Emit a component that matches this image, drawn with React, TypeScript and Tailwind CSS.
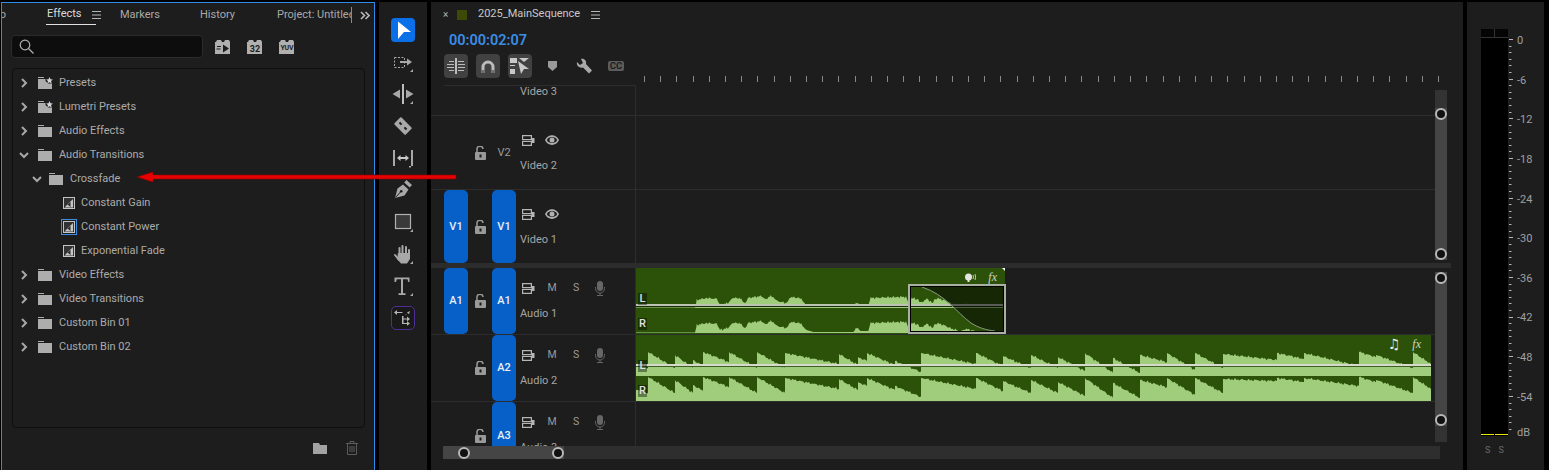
import React from "react";

const tree = [
  { label: "Presets", kind: "star", depth: 0 },
  { label: "Lumetri Presets", kind: "star", depth: 0 },
  { label: "Audio Effects", kind: "folder", depth: 0 },
  { label: "Audio Transitions", kind: "folder", depth: 0, open: true },
  { label: "Crossfade", kind: "folder", depth: 1, open: true },
  { label: "Constant Gain", kind: "fx", depth: 2 },
  { label: "Constant Power", kind: "fx", depth: 2, selected: true },
  { label: "Exponential Fade", kind: "fx", depth: 2 },
  { label: "Video Effects", kind: "folder", depth: 0 },
  { label: "Video Transitions", kind: "folder", depth: 0 },
  { label: "Custom Bin 01", kind: "folder", depth: 0 },
  { label: "Custom Bin 02", kind: "folder", depth: 0 },
];

function Chevron({ open }: { open?: boolean }) {
  return (
    <svg width="10" height="10" viewBox="0 0 10 10" fill="none" stroke="#a8a8a8" strokeWidth="2">
      {open ? <path d="M1 3l4 4 4-4" /> : <path d="M3 1l4 4-4 4" />}
    </svg>
  );
}

function Folder({ star }: { star?: boolean }) {
  return (
    <svg width="15" height="13" viewBox="0 0 15 13" fill="#adadad">
      <rect x="0" y="0" width="6" height="1" />
      {star ? (
        <>
          <path d="M0 2h7.500v2l2.500 2.500h4V12H0z" />
          <path d="M11.500 0l1 2.200 2.400.3-1.800 1.500.5 2.400-2.100-1.200-2.100 1.200.5-2.400L8.100 2.500l2.400-.3z" fill="#d4d4d4" />
        </>
      ) : (
        <path d="M0 2h14v10H0z" />
      )}
    </svg>
  );
}

function FxIcon() {
  return (
    <svg width="12" height="12" viewBox="0 0 12 12">
      <rect width="12" height="12" fill="#c4c4c4" />
      <path d="M1 1h10v10H1z" fill="#333" />
      <path d="M1.500 10.500l8.500-8.500v8.500z" fill="#c4c4c4" />
      <path d="M4.500 7.500l3-2.500v5z" fill="#2a2a2a" />
    </svg>
  );
}

function Menu() {
  return (
    <svg className="shrink-0" width="9" height="8" viewBox="0 0 9 8" fill="#b5b5b5">
      <rect y="0" width="9" height="1" />
      <rect y="3.500" width="9" height="1" />
      <rect y="7" width="9" height="1" />
    </svg>
  );
}

function Block({ children }: { children: React.ReactNode }) {
  return (
    <svg width="16" height="14" viewBox="0 0 16 14" fill="#b0b0b0">
      <path d="M0 2h1l1-2h4l1 2h2l1-2h4l1 2v12H0z" />
      {children}
    </svg>
  );
}

function EffectsPanel() {
  return (
    <div className="w-[374px] h-[468px] mt-[2px] ml-px bg-[#1d1d1d] border-x border-t border-[#2d8ceb] shrink-0 flex flex-col">
      <div className="h-[22px] flex items-center pt-[2px] text-[11px] text-[#a9a9a9]">
        <div className="w-[4px] overflow-hidden flex justify-end">
          <span className="shrink-0">Info</span>
        </div>
        <div className="ml-[40px] w-[50px] h-[20px] border-b border-[#e0e0e0] flex items-center gap-[10px] pl-px shrink-0">
          <span className="text-[#dcdcdc]">Effects</span>
          <Menu />
        </div>
        <span className="ml-6 w-[80px] shrink-0">Markers</span>
        <span className="w-[77px] shrink-0">History</span>
        <div className="w-[75px] shrink-0 overflow-hidden whitespace-nowrap border-r border-[#8a8a8a]">Project: Untitled</div>
        <svg className="ml-2 shrink-0" width="10" height="9" viewBox="0 0 10 9" fill="none" stroke="#b8b8b8" strokeWidth="1.600">
          <path d="M1 1l3.500 3.500L1 8M5.500 1L9 4.500 5.500 8" />
        </svg>
      </div>
      <div className="flex items-center mt-[10px] ml-[9px] h-[23px]">
        <div className="w-[192px] h-[23px] rounded bg-[#0d0d0d] border border-[#2b2b2b] flex items-center pl-[7px]">
          <svg width="15" height="15" viewBox="0 0 15 15" fill="none" stroke="#b0b0b0" strokeWidth="1.200">
            <circle cx="6" cy="6" r="4.800" />
            <path d="M9.500 9.500l5 5" />
          </svg>
        </div>
        <div className="ml-3 flex gap-4">
          <Block>
            <path d="M2 6h4v1H2zM1.500 8.500h4v1h-4zM8 4.500l6 4-6 4z" fill="#1d1d1d" />
          </Block>
          <div className="relative">
            <Block>{null}</Block>
            <span className="absolute inset-0 pt-[2px] text-center text-[9px] leading-[14px] font-bold text-[#1d1d1d]">32</span>
          </div>
          <div className="relative">
            <Block>{null}</Block>
            <span className="absolute inset-0 pt-[1px] text-center text-[7px] leading-[14px] font-bold text-[#1d1d1d]">YUV</span>
          </div>
        </div>
      </div>
      <div className="ml-[10px] mt-[10px] w-[353px] h-[360px] rounded border border-[#0f0f0f] pt-[2px]">
        {tree.map((t) => (
          <div key={t.label} className="h-6 flex items-center text-[11px] text-[#ababab]">
            {t.depth === 2 ? (
              <div className="ml-[48px] w-4 h-4 flex items-center justify-center mr-[4px]">
                <div className={t.selected ? "w-4 h-4 border border-[#3a8ee6] flex items-center justify-center" : "flex"}>
                  <FxIcon />
                </div>
              </div>
            ) : (
              <>
                <div className={t.depth === 1 ? "ml-[19px] w-[17px] flex" : "ml-[6px] w-[19px] flex"}>
                  <Chevron open={t.open} />
                </div>
                <div className="w-[21px] flex">
                  <Folder star={t.kind === "star"} />
                </div>
              </>
            )}
            <span className="leading-[14px]">{t.label}</span>
          </div>
        ))}
      </div>
      <div className="flex justify-end items-center gap-[19px] pr-[16px] mt-[13px]">
        <svg width="14" height="11" viewBox="0 0 14 11" fill="#a3a3a3">
          <path d="M0 0h6l1 2h7v9H0z" />
        </svg>
        <svg width="12" height="14" viewBox="0 0 12 14" fill="none" stroke="#5c5c5c">
          <path d="M0 2.500h12M4 2.500V.5h4v2M1.500 2.500v11h9v-11M4 5v6M6 5v6M8 5v6" />
        </svg>
      </div>
    </div>
  );
}

function Corner() {
  return <path d="M22 19v3h-3z" fill="#a8a8a8" />;
}

function Tool({ children }: { children: React.ReactNode }) {
  return (
    <svg width="24" height="24" viewBox="0 0 24 24" fill="#a8a8a8">
      {children}
    </svg>
  );
}

function ToolsPanel() {
  return (
    <div className="w-[48px] h-[468px] mt-[2px] ml-[4px] bg-[#1d1d1d] shrink-0 flex flex-col items-center gap-2 pt-4">
      <div className="w-6 h-6 rounded bg-[#0b6fe8]">
        <svg width="24" height="24" viewBox="0 0 24 24" fill="#fff">
          <path d="M7 3.500L20 14h-7l-6 7z" />
        </svg>
      </div>
      <Tool>
        <rect x="3.500" y="7.500" width="10" height="10" fill="none" stroke="#a8a8a8" strokeDasharray="2 1.500" />
        <path d="M9 11h7V8.500l5 3.500-5 3.500V13H9z" />
        <Corner />
      </Tool>
      <Tool>
        <path d="M1.500 12L9 7.500v9zM22.500 12L15 7.500v9z" />
        <rect x="11" y="2" width="2" height="20" fill="#bdbdbd" />
        <Corner />
      </Tool>
      <Tool>
        <g transform="rotate(45 12 12)">
          <rect x="4" y="7" width="16" height="10" rx="1" />
          <path d="M7 12h3M14 12h3" stroke="#1d1d1d" strokeWidth="2" />
        </g>
      </Tool>
      <Tool>
        <path d="M2 4h2v16H2zM20 4h2v16h-2l0 1.500h-2V20h2z" />
        <path d="M6 12l3.500-3v2h5V9l3.500 3-3.500 3v-2h-5v2z" fill="#c8c8c8" />
      </Tool>
      <Tool>
        <path d="M4 20L6.500 10.500 12 6.500 17.500 11.500 13.500 17.500Z" />
        <path d="M13.200 4.500L15.500 2 21 7 18.700 9.500Z" />
        <path d="M4.500 19.500L9.500 14" stroke="#1d1d1d" />
        <circle cx="10.200" cy="13.300" r="1.300" fill="#1d1d1d" />
      </Tool>
      <Tool>
        <rect x="4.500" y="4.500" width="15" height="14" fill="#3a3a3a" stroke="#b0b0b0" strokeWidth="1.200" />
        <Corner />
      </Tool>
      <Tool>
        <g stroke="#a8a8a8" strokeWidth="2" strokeLinecap="round">
          <path d="M8.500 12V6M11.500 11V4M15 11V5M18 13V8M4 13l4 5" />
        </g>
        <path d="M7 11h12v6l-3 4.500H10L6 17z" />
        <Corner />
      </Tool>
      <Tool>
        <path d="M3.500 3.500h15V8h-1.200l-.8-2.800H12v14h2.500V21h-7v-1.800H10v-14H5.800L5 8H3.500z" />
        <Corner />
      </Tool>
      <div className="w-6 h-6 rounded-[5px] border border-[#4f2f97] bg-[#191919]">
        <svg width="22" height="22" viewBox="0 0 22 22" fill="#b5b5b5">
          <path d="M2 5.500L5 3v2h5.500v1H5v2zM13 8l3-1.500-1-1 3-1.500-1 3.200-1-1-2.500 2zM10 9h1.500v8H10zM10 11.500h5v-2l3 2.500-3 2.500v-2h-5zM10 16h5v-1.800l3 2.300-3 2.300V17h-5z" />
        </svg>
      </div>
    </div>
  );
}

function SyncIcon() {
  return (
    <svg width="13" height="11" viewBox="0 0 13 11" fill="none" stroke="#b5b5b5" strokeWidth="1.200">
      <path d="M.6.6h8.800v4H.6zM.6 6.500h8.800v3.900H.6z" />
      <rect x="9.500" y="3" width="3" height="5" fill="#b5b5b5" stroke="none" />
    </svg>
  );
}

function Eye() {
  return (
    <svg width="14" height="10" viewBox="0 0 14 10">
      <path d="M0 5c3-6.500 11-6.500 14 0-3 6.500-11 6.500-14 0z" fill="#b0b0b0" />
      <ellipse cx="7" cy="5" rx="5" ry="3" fill="#1d1d1d" />
      <circle cx="7" cy="5" r="2.500" fill="#b0b0b0" />
    </svg>
  );
}

function Mic() {
  return (
    <svg width="10" height="15" viewBox="0 0 10 15" fill="none" stroke="#666">
      <rect x="2" y="0" width="6" height="10" rx="3" fill="#666" stroke="none" />
      <path d="M.5 6v1.500a4.500 4.500 0 0 0 9 0V6M5 12v2.500M2 14.500h6" />
    </svg>
  );
}

function Lock() {
  return (
    <svg width="11" height="14" viewBox="0 0 11 14">
      <path d="M2 6V3.500a3 3 0 0 1 6-.5" fill="none" stroke="#9a9a9a" strokeWidth="1.500" />
      <rect x="0" y="6" width="11" height="8" rx="1" fill="#9a9a9a" />
      <rect x="4.500" y="8.500" width="2" height="3" fill="#1d1d1d" />
    </svg>
  );
}

function TrackBtn({ label }: { label: string }) {
  return (
    <div className="w-6 h-full pt-px rounded-[5px] bg-[#0760c8] flex items-center justify-center text-[11px] font-medium text-[#e8eef6]">
      {label}
    </div>
  );
}

function TrackHead({
  name,
  tag,
  source,
  active,
  audio,
}: {
  name: string;
  tag: string;
  source?: boolean;
  active?: boolean;
  audio?: boolean;
}) {
  return (
    <div className="w-[205px] h-full shrink-0 flex pl-[13px] border-r border-[#2d2d2d] overflow-hidden">
      {source ? <TrackBtn label={tag} /> : <div className="w-6" />}
      <div className="w-6 flex items-center justify-center">
        <Lock />
      </div>
      {active ? (
        <TrackBtn label={tag} />
      ) : (
        <div className="w-6 pt-px flex items-center justify-center text-[11px] text-[#9a9a9a]">{tag}</div>
      )}
      <div className={audio ? "pt-[13px]" : "pt-[17px]"}>
        <div className="flex h-[14px] items-center">
          <div className="w-6 flex justify-center"><SyncIcon /></div>
          {audio ? (
            <>
              <div className="w-6 text-center text-[10.500px] text-[#9a9a9a]">M</div>
              <div className="w-6 text-center text-[10.500px] text-[#9a9a9a]">S</div>
              <div className="w-6 flex justify-center"><Mic /></div>
            </>
          ) : (
            <div className="w-6 flex justify-center"><Eye /></div>
          )}
        </div>
        <div className="mt-3 pl-1 text-[11px] leading-[14px] text-[#a5a5a5] whitespace-nowrap">{name}</div>
      </div>
    </div>
  );
}

// [start x, peak, end height, end height of the R channel]
const saw: number[][] = [
  [636, 11, 8], [648, 24, 8], [675, 21, 8], [693, 16, 10], [703, 24, 14], [729, 24, 8], [757, 24, 8],
  [785, 23, 12], [839, 22, 11], [858, 19, 15], [867, 23, 11], [895, 15, 4], [921, 23, 12], [976, 23, 10],
  [1003, 20, 8], [1031, 21, 8], [1058, 19, 5], [1085, 23, 3], [1113, 18, 3], [1140, 21, 14], [1167, 23, 6],
  [1195, 23, 8], [1223, 22, 16, 20], [1277, 23, 17, 19], [1304, 23, 10, 15], [1359, 24, 19], [1376, 21, 8, 8], [1413, 24, 12],
];

function jag(i: number) {
  return Math.sin(i * 2.3) * 0.8 + Math.sin(i * 5.1) * 0.6;
}

function sawPath(base: number, right: boolean) {
  let d = `M0 ${base}`;
  saw.forEach((s, n) => {
    const x0 = s[0] - 636;
    const x1 = (n + 1 < saw.length ? saw[n + 1][0] : 1431) - 636;
    const end = right && s[3] ? s[3] : s[2];
    for (let x = x0; x < x1; x += 1.5) {
      const t = (x - x0) / (x1 - x0);
      const h = s[1] + (end - s[1]) * t + (t > 0.05 ? jag(x) : 0);
      d += `L${x} ${base - h}`;
    }
    d += `L${x1} ${base - end}`;
  });
  return d + `L795 ${base}Z`;
}

const hump: number[][] = [
  [18, 0.6], [195, 0.6], [200, 8], [230, 10], [260, 9], [270, 3], [295, 5], [305, 10], [330, 10], [345, 4], [355, 10],
  [395, 12], [408, 8], [422, 13], [440, 7], [470, 5], [480, 11], [510, 10], [530, 3], [550, 1], [670, 1], [680, 5], [692, 2],
  [715, 2], [722, 10], [800, 11], [830, 11], [836, 3], [845, 10], [860, 9], [875, 5], [890, 10], [905, 5], [920, 10],
  [940, 8], [960, 5], [990, 1.500], [1005, 4], [1025, 3], [1050, 1], [1125, 1],
];

function humpPath(base: number) {
  let d = `M0 ${base}`;
  hump.forEach((p, n) => {
    const next = hump[n + 1];
    if (!next) return;
    for (let z = p[0]; z < next[0]; z += 4) {
      const t = (z - p[0]) / (next[0] - p[0]);
      const h = p[1] + (next[1] - p[1]) * t;
      d += `L${(z - 18) / 3} ${base - h - (h > 3 ? jag(z) : 0)}`;
    }
  });
  return d + `L369 ${base}Z`;
}

function ChannelTag({ label, className }: { label: string; className: string }) {
  return (
    <div className={`absolute left-[2px] w-[9px] h-[12px] bg-[#00000066] text-[11px] leading-[12px] font-medium text-center text-[#e0e0e0] ${className}`}>
      {label}
    </div>
  );
}

function ClipA1() {
  return (
    <div className="relative w-[369px] h-full bg-[#2c5209] shrink-0">
      <svg className="absolute inset-0" width="369" height="66" viewBox="0 0 369 66">
        <path d={humpPath(40)} fill="#9fcd7c" />
        <path d={humpPath(65)} fill="#9fcd7c" />
        <rect x="0" y="36" width="369" height="2" fill="#bcc3b2" />
        <rect x="0" y="38" width="369" height="1" fill="#1b2c0c" />
        <path d="M366 0h3v3z" fill="#fff" />
      </svg>
      <ChannelTag label="L" className="top-[25px]" />
      <ChannelTag label="R" className="top-[50px]" />
      <div className="absolute right-[8px] top-[1px] h-4 flex items-center gap-[12px]">
        <svg width="11" height="9" viewBox="0 0 11 9" fill="#e4e4e4">
          <circle cx="3.500" cy="4" r="3.500" />
          <rect x="2.500" y="6" width="2" height="3" />
          <path d="M8 2q1 2 0 4M10 1q1.300 3 0 6" fill="none" stroke="#e4e4e4" strokeWidth=".8" />
        </svg>
        <span className="[font-family:'Liberation_Serif',serif] italic text-[12px] text-[#cfd6c6]">fx</span>
      </div>
      <div className="absolute left-[272px] top-4 w-[98px] h-[50px] border-2 border-[#a9afa1]">
        <div className="w-full h-full border border-black">
          <svg width="92" height="44" viewBox="0 0 92 44" className="block">
            <path d="M11 0C35 8 45 25 60 36 68 41 75 43 84 44H92V0Z" fill="#00000085" />
            <path d="M11 0C35 8 45 25 60 36 68 41 75 43 84 44" fill="none" stroke="#8c9a80" />
          </svg>
        </div>
      </div>
    </div>
  );
}

function ClipA2() {
  return (
    <div className="relative w-[795px] h-full bg-[#2c5209] shrink-0">
      <svg className="absolute inset-0" width="795" height="66" viewBox="0 0 795 66">
        <path d={sawPath(41, false)} fill="#9fcd7c" />
        <path d={sawPath(66, true)} fill="#9fcd7c" />
        <rect x="0" y="29" width="795" height="2" fill="#d5dacb" />
        <rect x="0" y="31" width="795" height="1" fill="#3f5f28" />
      </svg>
      <ChannelTag label="L" className="top-[25px]" />
      <ChannelTag label="R" className="top-[50px]" />
      <div className="absolute right-[10px] top-[1px] h-4 flex items-center gap-[12px]">
        <span className="[font-family:'DejaVu_Sans',sans-serif] text-[14px] leading-4 text-[#f0f0f0]">♫</span>
        <span className="[font-family:'Liberation_Serif',serif] italic text-[12px] text-[#cfd6c6]">fx</span>
      </div>
    </div>
  );
}

function Handle() {
  return <div className="w-3 h-3 rounded-full border-2 border-[#b8b8b8] bg-[#111] shrink-0" />;
}

function VScroll({ className, thumb }: { className: string; thumb: string }) {
  return (
    <div className={`w-3 h-[170px] bg-[#333] shrink-0 ${className}`}>
      <div className={`w-3 bg-[#454545] flex flex-col justify-between ${thumb}`}>
        <Handle />
        <Handle />
      </div>
    </div>
  );
}

function Timeline() {
  const ticks = Array.from({ length: 50 }, (_, i) => i);
  return (
    <div className="w-[1032px] h-[468px] mt-[2px] ml-1 bg-[#1d1d1d] shrink-0 flex flex-col">
      <div className="h-6 flex items-center pl-[12px] pt-px text-[#c8c8c8]">
        <span className="text-[10px] w-[14px] text-[#b0b0b0]">×</span>
        <div className="w-[10px] h-[10px] bg-[#3d4a07]" />
        <span className="ml-[11px] text-[11px]">2025_MainSequence</span>
        <div className="ml-[11px] flex"><Menu /></div>
      </div>
      <div className="h-7 pl-[18px] pt-[2px] flex items-center text-[14.500px] font-semibold text-[#3a8ee6]">00:00:02:07</div>
      <div className="h-[31px] flex">
        <div className="w-[205px] flex items-start pl-[13px] gap-2">
          <div className="w-6 h-6 rounded bg-[#414141] flex items-center justify-center">
            <svg width="18" height="16" viewBox="0 0 18 16" fill="#bcbcbc">
              <path d="M8 0h2v16H8zM0 6h7v1H0zM0 9h7v1H0zM11 3h6v1h-6zM11 6h7v1h-7zM11 9h7v1h-7zM11 12h6v1h-6zM2 3h5v1H2zM2 12h5v1H2z" />
            </svg>
          </div>
          <div className="w-6 h-6 rounded bg-[#414141] flex items-center justify-center">
            <svg width="14" height="13" viewBox="0 0 14 13" fill="none">
              <path d="M2 13V7a5 5 0 0 1 10 0v6" stroke="#bcbcbc" strokeWidth="3" />
              <path d="M.5 10h3v3h-3zM10.500 10h3v3h-3z" fill="#6e6e6e" />
            </svg>
          </div>
          <div className="w-6 h-6 rounded bg-[#414141] flex items-center justify-center">
            <svg width="20" height="18" viewBox="0 0 20 18" fill="#c8c8c8">
              <path d="M0 1h7v5H0zM0 8h5v1H0zM0 12h5v5H0z" />
              <path d="M9 1h10l-5 4z" />
              <path d="M8 4l11 8h-5l-3 5z" />
            </svg>
          </div>
          <div className="w-6 h-6 flex items-center justify-center">
            <svg width="9" height="10" viewBox="0 0 9 10" fill="#9a9a9a">
              <path d="M0 0h9v6L4.500 10 0 6z" />
            </svg>
          </div>
          <div className="w-6 h-6 flex items-center justify-center">
            <svg width="16" height="16" viewBox="0 0 16 16" fill="#a8a8a8">
              <path d="M1 4L4 7 7 5 5 1C8 0 11 3 10 6L16 12.500 13 15.500 7 9.500C4 10.500 0 8 1 4Z" />
            </svg>
          </div>
          <div className="w-6 h-6 flex items-center justify-center">
            <div className="w-4 h-[10px] rounded-[2px] bg-[#5c5c5c] text-[9.500px] leading-[10px] font-bold text-center text-[#1d1d1d]">CC</div>
          </div>
        </div>
        <div className="w-[795px] ml-2 pt-[22px] flex justify-between items-start">
          {ticks.map((i) => (
            <div key={i} className="w-px h-[6px] bg-[#8a8a8a]" />
          ))}
        </div>
      </div>
      <div className="h-[178px] flex">
        <div className="w-[1004px] shrink-0">
          <div className="h-[31px] flex border-b border-[#2d2d2d]">
            <div className="w-[205px] h-full pl-[13px] border-r border-[#2d2d2d] overflow-hidden">
              <div className="h-full border-t border-[#2d2d2d] pl-[76px] text-[11px] leading-[11px] text-[#a5a5a5]">Video 3</div>
            </div>
          </div>
          <div className="h-[74px] flex border-b border-[#2d2d2d]">
            <TrackHead name="Video 2" tag="V2" />
          </div>
          <div className="h-[73px] flex">
            <TrackHead name="Video 1" tag="V1" source active />
          </div>
        </div>
        <VScroll className="mt-[5px] pt-[18px]" thumb="h-[152px]" />
      </div>
      <div className="h-[5px] w-[1020px] bg-[#2c2c2c]" />
      <div className="h-[178px] flex overflow-hidden">
        <div className="w-[1004px] shrink-0">
          <div className="h-[67px] flex border-b border-[#2d2d2d]">
            <TrackHead name="Audio 1" tag="A1" source active audio />
            <ClipA1 />
          </div>
          <div className="h-[67px] flex border-b border-[#2d2d2d]">
            <TrackHead name="Audio 2" tag="A2" active audio />
            <ClipA2 />
          </div>
          <div className="h-[67px] flex">
            <TrackHead name="Audio 3" tag="A3" active audio />
          </div>
        </div>
        <VScroll className="mt-1" thumb="h-[154px]" />
      </div>
      <div className="w-[997px] h-[13px] ml-3 bg-[#2e2e2e]">
        <div className="w-[121px] h-[13px] bg-[#454545] pl-[15px] flex justify-between items-center">
          <Handle />
          <Handle />
        </div>
      </div>
    </div>
  );
}

function Meter() {
  const labels = ["0", "-6", "-12", "-18", "-24", "-30", "-36", "-42", "-48", "-54"];
  const marks = Array.from({ length: 60 }, (_, i) => i);
  return (
    <div className="w-[77px] h-[468px] mt-[2px] ml-1 bg-[#1d1d1d] shrink-0 flex pl-[14px] pt-[27px]">
      <div className="w-[27px] flex flex-col">
        <div className="h-[407px] bg-black flex flex-col">
          <div className="h-[9px] flex gap-px pb-px bg-[#333]">
            <div className="flex-1 bg-[#050505]" />
            <div className="flex-1 bg-[#050505]" />
          </div>
          <div className="flex-1 flex gap-px items-end pb-px">
            <div className="flex-1 h-px bg-[#e8e800]" />
            <div className="flex-1 h-px bg-[#e8e800]" />
          </div>
        </div>
        <div className="flex justify-around mt-2 text-[9px] leading-[12px] text-[#6a6a6a]">
          <span>S</span>
          <span>S</span>
        </div>
      </div>
      <svg width="6" height="409" viewBox="0 0 6 409" fill="#b5b5b5" className="shrink-0">
        {marks.map((i) => {
          const y = 10 + i * 6.61;
          const major = i % 6 === 0;
          return y < 408 ? <rect key={i} x={1} y={Math.round(y)} width={major ? 4 : 2.500} height="1" /> : null;
        })}
      </svg>
      <div className="pl-[3px] pt-[5px] text-[11px] leading-[14px] text-[#a0a0a0]">
        {labels.map((l) => (
          <div key={l} className="h-[39.650px]">{l}</div>
        ))}
        <div className="-mt-[4px]">dB</div>
      </div>
    </div>
  );
}

export default function App() {
  return (
    <div className="relative w-[1549px] h-[470px] bg-black flex overflow-hidden [font-family:Roboto,sans-serif]">
      <EffectsPanel />
      <ToolsPanel />
      <Timeline />
      <Meter />
      <svg className="absolute left-[130px] top-[168px]" width="330" height="18" viewBox="0 0 330 18">
        <path d="M7 9L23 4V7H326V11H23V14Z" fill="#e60000" stroke="#8e0000" strokeWidth=".6" />
      </svg>
    </div>
  );
}
